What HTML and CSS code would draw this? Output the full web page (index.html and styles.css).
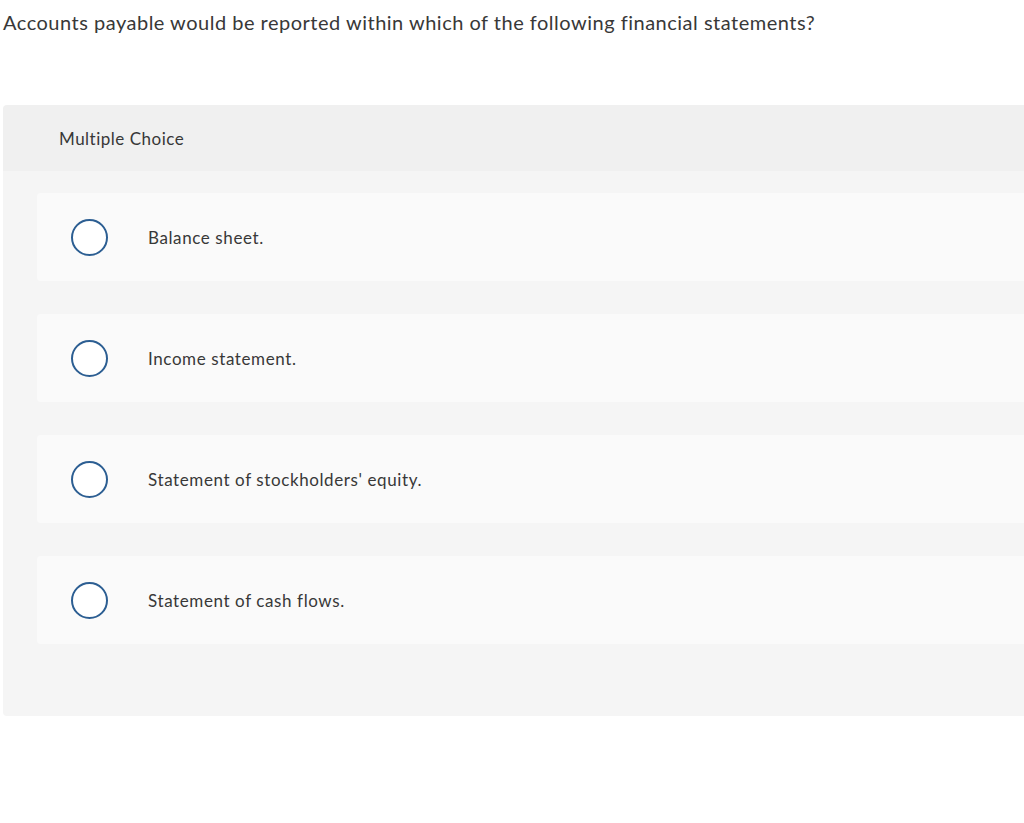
FILE: index.html
```html
<!DOCTYPE html>
<html lang="en">
<head>
    <meta charset="UTF-8">
    <meta name="viewport" content="width=device-width, initial-scale=1.0">
    <title>Multiple Choice</title>
    <link rel="stylesheet" href="styles.css">
</head>
<body>
    <p class="question">Accounts payable would be reported within which of the following financial statements?</p>

    <div class="mc-panel">
        <div class="mc-header">Multiple Choice</div>
        <div class="mc-body">
            <label class="choice">
                <span class="radio"></span>
                <span class="choice-text">Balance sheet.</span>
            </label>
            <label class="choice">
                <span class="radio"></span>
                <span class="choice-text">Income statement.</span>
            </label>
            <label class="choice">
                <span class="radio"></span>
                <span class="choice-text">Statement of stockholders' equity.</span>
            </label>
            <label class="choice">
                <span class="radio"></span>
                <span class="choice-text">Statement of cash flows.</span>
            </label>
        </div>
    </div>
</body>
</html>
```

FILE: styles.css
```css
body {
    margin: 0;
    font-family: Lato, "Open Sans", Arial, sans-serif;
    color: #383838;
    background: #fff;
    overflow: hidden;
}
.question {
    margin: 0;
    padding: 8px 0 0 3px;
    font-size: 20px;
    line-height: 28px;
    letter-spacing: 0.5px;
}
.mc-panel {
    margin: 69px -20px 0 3px;
    border-radius: 4px;
    overflow: hidden;
}
.mc-header {
    background: #f0f0f0;
    height: 66px;
    padding-left: 56px;
    display: flex;
    align-items: center;
    font-size: 17px;
    letter-spacing: 0.5px;
}
.mc-body {
    background: #f5f5f5;
    padding: 22px 0 72px 34px;
    display: flex;
    flex-direction: column;
    gap: 33px;
}
.choice {
    background: #fafafa;
    border-radius: 4px;
    height: 88px;
    display: flex;
    align-items: center;
    padding-left: 34px;
}
.radio {
    width: 37px;
    height: 37px;
    box-sizing: border-box;
    border: 2px solid #2c5e92;
    border-radius: 50%;
    background: #fff;
    flex: none;
}
.choice-text {
    margin-left: 40px;
    font-size: 17px;
    letter-spacing: 0.6px;
}
```
